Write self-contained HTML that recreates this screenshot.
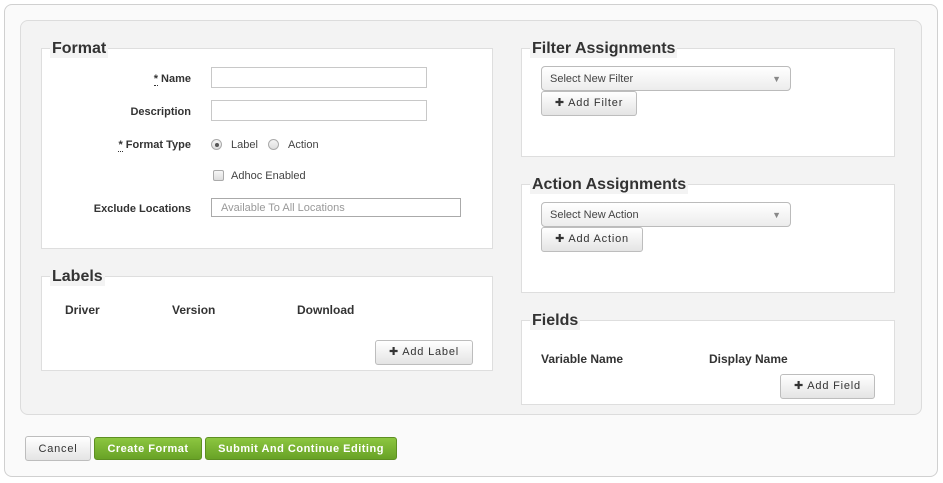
<!DOCTYPE html>
<html><head><style>
body{margin:0;width:943px;height:483px;background:#fff;font-family:"Liberation Sans",sans-serif;position:relative;overflow:hidden}
.a{position:absolute;box-sizing:border-box}
.outer{left:4px;top:4px;width:934px;height:473px;border:1px solid #d0d0d0;border-radius:8px;background:#fafafa}
.inner{left:20px;top:20px;width:902px;height:395px;border:1px solid #dcdcdc;border-radius:8px;background:#f3f3f3}
.fs{background:#fff;border:1px solid #dedede}
.lg{font-size:16px;font-weight:bold;color:#333;background:#f3f3f3;padding:0 2px;line-height:18px}
.lb{font-size:11px;font-weight:bold;color:#333;text-align:right;width:150px}
.in{border:1px solid #c8c8c8;background:#fff}
.t{font-size:11px;color:#444}
.btn{border:1px solid #bdbdbd;border-radius:3px;background:linear-gradient(#fff,#e4e4e4);font-size:11px;color:#333;letter-spacing:.8px;text-align:center}
.g{border:1px solid #5d8f22;border-radius:3px;background:linear-gradient(#8cc640,#68a226);color:#fff;font-size:11px;font-weight:bold;letter-spacing:.5px;text-align:center;line-height:22px}
.h{font-size:12px;font-weight:bold;color:#333}
.sel{border:1px solid #bbb;border-radius:4px;background:linear-gradient(#fff,#ececec);font-size:11px;color:#444;padding-left:8px;line-height:24px}
.rad{width:11px;height:11px;border:1px solid #aaa;border-radius:50%;background:linear-gradient(#f4f4f4,#ddd)}
</style></head><body>
<div class="a outer"></div>
<div class="a inner"></div>

<div class="a fs" style="left:41px;top:48px;width:452px;height:201px"></div>
<div class="a lg" style="left:50px;top:40px">Format</div>
<div class="a lb" style="left:41px;top:73px"><span style="border-bottom:1px dotted #333">*</span> Name</div>
<div class="a in" style="left:211px;top:67px;width:216px;height:21px"></div>
<div class="a lb" style="left:41px;top:106px">Description</div>
<div class="a in" style="left:211px;top:100px;width:216px;height:21px"></div>
<div class="a lb" style="left:41px;top:139px"><span style="border-bottom:1px dotted #333">*</span> Format Type</div>
<div class="a rad" style="left:211px;top:139px"><div class="a" style="left:3px;top:3px;width:4px;height:4px;border-radius:50%;background:#555"></div></div>
<div class="a t" style="left:231px;top:139px">Label</div>
<div class="a rad" style="left:268px;top:139px"></div>
<div class="a t" style="left:288px;top:139px">Action</div>
<div class="a" style="left:213px;top:170px;width:11px;height:11px;border:1px solid #aaa;border-radius:2px;background:linear-gradient(#f6f6f6,#ddd)"></div>
<div class="a t" style="left:231px;top:170px">Adhoc Enabled</div>
<div class="a lb" style="left:41px;top:203px">Exclude Locations</div>
<div class="a in" style="left:211px;top:198px;width:250px;height:19px;border-color:#aaa"><span class="t" style="color:#999;position:absolute;left:9px;top:3px">Available To All Locations</span></div>

<div class="a fs" style="left:41px;top:276px;width:452px;height:95px"></div>
<div class="a lg" style="left:50px;top:268px">Labels</div>
<div class="a h" style="left:65px;top:303px">Driver</div>
<div class="a h" style="left:172px;top:303px">Version</div>
<div class="a h" style="left:297px;top:303px">Download</div>
<div class="a btn" style="left:375px;top:340px;width:98px;height:25px;line-height:23px">✚ Add Label</div>

<div class="a fs" style="left:521px;top:48px;width:374px;height:109px"></div>
<div class="a lg" style="left:530px;top:40px">Filter Assignments</div>
<div class="a sel" style="left:541px;top:66px;width:250px;height:25px">Select New Filter<span style="position:absolute;right:9px;top:0;color:#888;font-size:9px">▼</span></div>
<div class="a btn" style="left:541px;top:91px;width:96px;height:25px;line-height:23px">✚ Add Filter</div>

<div class="a fs" style="left:521px;top:184px;width:374px;height:109px"></div>
<div class="a lg" style="left:530px;top:176px">Action Assignments</div>
<div class="a sel" style="left:541px;top:202px;width:250px;height:25px">Select New Action<span style="position:absolute;right:9px;top:0;color:#888;font-size:9px">▼</span></div>
<div class="a btn" style="left:541px;top:227px;width:102px;height:25px;line-height:23px">✚ Add Action</div>

<div class="a fs" style="left:521px;top:320px;width:374px;height:85px"></div>
<div class="a lg" style="left:530px;top:312px">Fields</div>
<div class="a h" style="left:541px;top:352px">Variable Name</div>
<div class="a h" style="left:709px;top:352px">Display Name</div>
<div class="a btn" style="left:780px;top:374px;width:95px;height:25px;line-height:23px">✚ Add Field</div>

<div class="a btn" style="left:25px;top:436px;width:66px;height:25px;line-height:24px">Cancel</div>
<div class="a g" style="left:94px;top:437px;width:108px;height:23px">Create Format</div>
<div class="a g" style="left:205px;top:437px;width:192px;height:23px">Submit And Continue Editing</div>
</body></html>
